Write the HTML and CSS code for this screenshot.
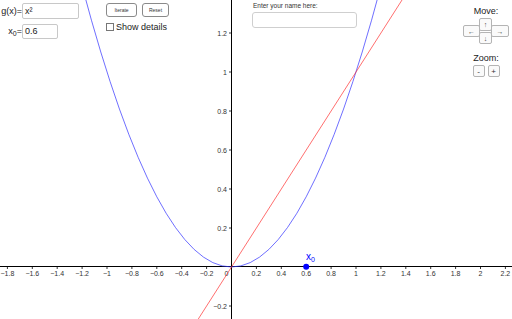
FILE: index.html
```html
<!DOCTYPE html>
<html>
<head>
<meta charset="utf-8">
<link rel="stylesheet" href="styles.css">
</head>
<body>
<div class="stage">
  <svg class="graph" width="512" height="319" viewBox="0 0 512 319" xmlns="http://www.w3.org/2000/svg">
    <g class="axes">
      <line x1="0" y1="266.5" x2="512" y2="266.5"/>
      <line x1="231.5" y1="0" x2="231.5" y2="319"/>
    </g>
    <g class="ticks">
      <path d="M7.4 266v3M32.3 266v3M57.2 266v3M82.1 266v3M107 266v3M131.9 266v3M156.8 266v3M181.7 266v3M206.6 266v3M256.4 266v3M281.3 266v3M306.2 266v3M331.1 266v3M356 266v3M380.9 266v3M405.8 266v3M430.7 266v3M455.6 266v3M480.5 266v3M505.4 266v3"/>
      <path d="M229 33h3M229 72h3M229 111h3M229 150h3M229 189h3M229 228h3M229 306h3"/>
    </g>
    <g class="xlabels">
      <text x="7.4" y="276">−1.8</text>
      <text x="32.3" y="276">−1.6</text>
      <text x="57.2" y="276">−1.4</text>
      <text x="82.1" y="276">−1.2</text>
      <text x="107" y="276">−1</text>
      <text x="131.9" y="276">−0.8</text>
      <text x="156.8" y="276">−0.6</text>
      <text x="181.7" y="276">−0.4</text>
      <text x="206.6" y="276">−0.2</text>
      <text x="226.5" y="276">0</text>
      <text x="256.4" y="276">0.2</text>
      <text x="281.3" y="276">0.4</text>
      <text x="306.2" y="276">0.6</text>
      <text x="331.1" y="276">0.8</text>
      <text x="356" y="276">1</text>
      <text x="380.9" y="276">1.2</text>
      <text x="405.8" y="276">1.4</text>
      <text x="430.7" y="276">1.6</text>
      <text x="455.6" y="276">1.8</text>
      <text x="480.5" y="276">2</text>
      <text x="505.4" y="276">2.2</text>
    </g>
    <g class="ylabels">
      <text x="227" y="35.5">1.2</text>
      <text x="227" y="74.5">1</text>
      <text x="227" y="113.5">0.8</text>
      <text x="227" y="152.5">0.6</text>
      <text x="227" y="191.5">0.4</text>
      <text x="227" y="230.5">0.2</text>
      <text x="227" y="308.5">−0.2</text>
    </g>
    <path class="parabola" d="M82.1 -13.8 Q231.5 547.8 380.9 -13.8"/>
    <line class="secant" x1="198.3" y1="319" x2="402" y2="0"/>
    <circle class="point" cx="306.2" cy="266.8" r="3"/>
    <text class="point-label" x="306" y="260">x<tspan class="sub" dy="2">0</tspan></text>
  </svg>

  <div class="panel panel-inputs">
    <span class="lbl">g(x)=</span>
    <div class="field field-g">x²</div>
    <span class="lbl">x<sub>0</sub>=</span>
    <div class="field field-x0">0.6</div>
  </div>

  <div class="panel panel-buttons">
    <div class="btn-row">
      <button class="btn btn-iterate">Iterate</button>
      <button class="btn btn-reset">Reset</button>
    </div>
    <label class="check-row"><span class="check"></span><span>Show details</span></label>
  </div>

  <div class="panel panel-name">
    <div class="name-label">Enter your name here:</div>
    <div class="name-field"></div>
  </div>

  <div class="panel panel-nav">
    <div class="nav-title">Move:</div>
    <div class="arrows">
      <div class="abtn abtn-h">←</div>
      <div class="arrows-mid">
        <div class="abtn abtn-up">↑</div>
        <div class="abtn abtn-down">↓</div>
      </div>
      <div class="abtn abtn-h abtn-right">→</div>
    </div>
    <div class="nav-title nav-zoom">Zoom:</div>
    <div class="zoom-row">
      <div class="zbtn">-</div>
      <div class="zbtn">+</div>
    </div>
  </div>
</div>
</body>
</html>
```

FILE: styles.css
```css
html, body {
  margin: 0;
  padding: 0;
  background: #ffffff;
}

.stage {
  position: relative;
  width: 512px;
  height: 319px;
  overflow: hidden;
  background: #ffffff;
  font-family: "Liberation Sans", Arial, sans-serif;
  color: #222;
}

.graph {
  position: absolute;
  left: 0;
  top: 0;
  display: block;
}

.axes line {
  stroke: #000;
  stroke-width: 1;
}

.ticks path {
  stroke: #000;
  stroke-width: 0.8;
  fill: none;
}

.xlabels text,
.ylabels text {
  font-family: "Liberation Sans", Arial, sans-serif;
  font-size: 7px;
  fill: #333;
}

.xlabels text {
  text-anchor: middle;
}

.ylabels text {
  text-anchor: end;
}

.parabola {
  fill: none;
  stroke: #3030ff;
  stroke-width: 0.7;
}

.secant {
  stroke: #ff3030;
  stroke-width: 0.7;
}

.point {
  fill: #0000ff;
}

.point-label {
  font-family: "Liberation Sans", Arial, sans-serif;
  font-size: 10px;
  fill: #0000ff;
}

.point-label .sub {
  font-size: 7px;
}

.panel {
  position: absolute;
}

/* left inputs */
.panel-inputs {
  left: 0;
  top: 3px;
  display: grid;
  grid-template-columns: 22px auto;
  grid-auto-rows: 16px;
  row-gap: 4px;
  align-items: center;
}

.lbl {
  font-size: 9px;
  text-align: right;
  white-space: nowrap;
  color: #222;
}

.lbl sub {
  font-size: 7px;
  vertical-align: -2px;
  line-height: 0;
}

.field {
  box-sizing: border-box;
  height: 16px;
  border: 1px solid #c8c8c8;
  border-radius: 2px;
  background: #fff;
  font-size: 9px;
  line-height: 14px;
  padding-left: 2px;
  color: #222;
}

.field-g {
  width: 57px;
}

.field-x0 {
  width: 36px;
  height: 15px;
  line-height: 13px;
}

/* buttons */
.panel-buttons {
  left: 106px;
  top: 3px;
  display: flex;
  flex-direction: column;
  gap: 5px;
}

.btn-row {
  display: flex;
  gap: 5px;
}

.btn {
  box-sizing: border-box;
  height: 14px;
  margin: 0;
  padding: 0;
  border: 1px solid #8a8a8a;
  border-radius: 3px;
  background: #fff;
  font-family: "Liberation Sans", Arial, sans-serif;
  font-size: 5px;
  color: #333;
  line-height: 12px;
}

.btn-iterate {
  width: 31px;
}

.btn-reset {
  width: 27px;
}

.check-row {
  display: flex;
  align-items: center;
  gap: 2px;
  font-size: 9px;
  color: #222;
  height: 10px;
}

.check {
  box-sizing: border-box;
  width: 8px;
  height: 8px;
  border: 1px solid #777;
  background: #fff;
}

/* name field */
.panel-name {
  left: 252px;
  top: 2px;
  display: flex;
  flex-direction: column;
  gap: 2px;
}

.name-label {
  font-size: 6.5px;
  line-height: 8px;
  color: #333;
  padding-left: 1px;
}

.name-field {
  box-sizing: border-box;
  width: 105px;
  height: 16px;
  border: 1px solid #cfcfcf;
  border-radius: 3px;
  background: #fff;
}

/* navigation */
.panel-nav {
  left: 461px;
  top: 6px;
  width: 50px;
  display: flex;
  flex-direction: column;
  align-items: center;
}

.nav-title {
  font-size: 9px;
  line-height: 10px;
  color: #222;
}

.arrows {
  margin-top: 2px;
  display: flex;
  align-items: center;
}

.arrows-mid {
  display: flex;
  flex-direction: column;
  gap: 1px;
  margin: 0 -1px;
  position: relative;
  z-index: 1;
}

.abtn {
  box-sizing: border-box;
  border: 1px solid #b4b4b4;
  border-radius: 2px;
  background: #fafafa;
  font-size: 7px;
  color: #444;
  display: flex;
  align-items: center;
  justify-content: center;
}

.abtn-h {
  width: 17px;
  height: 12px;
}

.abtn-right {
  width: 18px;
}

.abtn-up,
.abtn-down {
  width: 13px;
  height: 13px;
}

.abtn-down {
  height: 12px;
}

.nav-zoom {
  margin-top: 9px;
}

.zoom-row {
  margin-top: 2px;
  display: flex;
  gap: 3px;
}

.zbtn {
  box-sizing: border-box;
  width: 12px;
  height: 12px;
  border: 1px solid #b4b4b4;
  border-radius: 2px;
  background: #fafafa;
  font-size: 8px;
  color: #333;
  display: flex;
  align-items: center;
  justify-content: center;
}
```
